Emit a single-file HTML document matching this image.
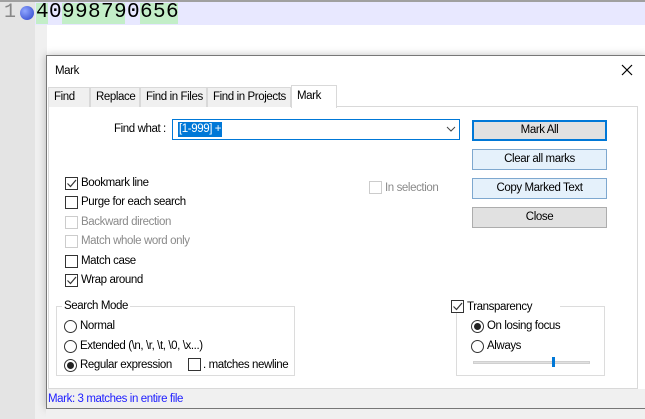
<!DOCTYPE html>
<html><head><style>
*{margin:0;padding:0;box-sizing:border-box}
body{width:645px;height:419px;overflow:hidden;background:#fff;font-family:"Liberation Sans",sans-serif;font-size:11.5px;letter-spacing:-0.4px;color:#000;position:relative}
.a{position:absolute}
.cb{position:absolute;width:13px;height:13px;border:1px solid #333;background:#fff}
.cb.d{border-color:#ccc}
.cb svg{position:absolute;left:0px;top:0px}
.rb{position:absolute;width:13px;height:13px;border:1px solid #333;border-radius:50%;background:#fff}
.rb.on::after{content:"";position:absolute;left:2px;top:2px;width:7px;height:7px;border-radius:50%;background:#222}
.lbl{position:absolute;white-space:nowrap;line-height:15px}
.g{color:#8a8a8a}
.btn{position:absolute;left:472px;width:135px;height:21px;border:1px solid #adadad;background:#e1e1e1;text-align:center;line-height:19px}
.tab{position:absolute;top:87px;height:20px;background:#f0f0f0;border:1px solid #d9d9d9;border-bottom:none;line-height:19px;padding-left:5px;white-space:nowrap}
</style></head><body>
<div class="a" style="left:0;top:0;width:645px;height:2px;background:#a0a0a0"></div>
<div class="a" style="left:0;top:2px;width:35px;height:417px;background:#e4e4e4"></div>
<div class="a" style="left:35px;top:2px;width:610px;height:23px;background:#e8e8ff"></div>
<div class="a" style="left:36px;top:3px;width:12px;height:21px;background:#c3eec8"></div>
<div class="a" style="left:62px;top:3px;width:63px;height:21px;background:#c3eec8"></div>
<div class="a" style="left:140px;top:3px;width:38px;height:21px;background:#c3eec8"></div>
<div class="a" style="left:4px;top:1px;font-family:'Liberation Mono',monospace;font-size:20px;color:#888;line-height:24px;letter-spacing:0">1</div>
<div class="a" style="left:20px;top:6px;width:14px;height:14px;border-radius:50%;background:radial-gradient(circle at 35% 35%,#8fa6ff,#2940c8)"></div>
<div class="a" style="left:36px;top:1px;font-family:'Liberation Mono',monospace;font-size:21px;line-height:24px;color:#000;letter-spacing:0.4px">40998790656</div>
<div class="a" style="left:35px;top:25px;width:12px;height:394px;background:#f0f0f0"></div>

<div class="a" style="left:46px;top:55px;width:600px;height:354px;border:1px solid #777;background:#fff;box-shadow:0 0 8px rgba(0,0,0,.25)"></div>
<div class="lbl" style="left:55px;top:64px">Mark</div>
<svg class="a" style="left:621px;top:64px" width="12" height="12"><path d="M1 1L11 11M11 1L1 11" stroke="#000" stroke-width="1.2"/></svg>

<div class="a" style="left:48px;top:106px;width:590px;height:283px;border:1px solid #d9d9d9;background:#fff"></div>
<div class="tab" style="left:48px;width:42px">Find</div>
<div class="tab" style="left:90px;width:50px">Replace</div>
<div class="tab" style="left:140px;width:67px">Find in Files</div>
<div class="tab" style="left:207px;width:84px">Find in Projects</div>
<div class="tab" style="left:291px;top:85px;height:23px;width:46px;background:#fff;line-height:21px">Mark</div>

<div class="lbl" style="left:114px;top:122px">Find what :</div>
<div class="a" style="left:172px;top:119px;width:288px;height:21px;border:1px solid #0078d7;background:#fff"></div>
<div class="a" style="left:178px;top:122px;height:15px;background:#0078d7;color:#fff;line-height:15px;padding:0 1px">[1-999]&nbsp;+</div>
<svg class="a" style="left:446px;top:126px" width="10" height="6"><path d="M1 1L5 5L9 1" stroke="#444" fill="none"/></svg>

<div class="btn" style="top:120px;border:2px solid #0078d7;line-height:17px">Mark All</div>
<div class="btn" style="top:149px;background:#e5f1fb;border-color:#7ea8cf">Clear all marks</div>
<div class="btn" style="top:178px;background:#e5f1fb;border-color:#7ea8cf">Copy Marked Text</div>
<div class="btn" style="top:207px">Close</div>

<div class="cb d" style="left:369px;top:181px"></div><div class="lbl g" style="left:385px;top:181px">In selection</div>

<div class="cb" style="left:65px;top:177px"><svg width="11" height="11"><path d="M1.5 5.5L4.5 8.5L10 2" stroke="#333" fill="none" stroke-width="1.2"/></svg></div><div class="lbl" style="left:81px;top:176px">Bookmark line</div>
<div class="cb" style="left:65px;top:196px"></div><div class="lbl" style="left:81px;top:195px">Purge for each search</div>
<div class="cb d" style="left:65px;top:216px"></div><div class="lbl g" style="left:81px;top:215px">Backward direction</div>
<div class="cb d" style="left:65px;top:235px"></div><div class="lbl g" style="left:81px;top:234px">Match whole word only</div>
<div class="cb" style="left:65px;top:255px"></div><div class="lbl" style="left:81px;top:254px">Match case</div>
<div class="cb" style="left:65px;top:274px"><svg width="11" height="11"><path d="M1.5 5.5L4.5 8.5L10 2" stroke="#333" fill="none" stroke-width="1.2"/></svg></div><div class="lbl" style="left:81px;top:273px">Wrap around</div>

<div class="a" style="left:56px;top:306px;width:239px;height:70px;border:1px solid #dcdcdc"></div>
<div class="lbl" style="left:62px;top:299px;background:#fff;padding:0 2px">Search Mode</div>
<div class="rb" style="left:64px;top:320px"></div><div class="lbl" style="left:80px;top:319px">Normal</div>
<div class="rb" style="left:64px;top:340px"></div><div class="lbl" style="left:80px;top:339px">Extended (\n, \r, \t, \0, \x...)</div>
<div class="rb on" style="left:64px;top:359px"></div><div class="lbl" style="left:80px;top:358px">Regular expression</div>
<div class="cb" style="left:188px;top:358px"></div>
<div class="lbl" style="left:203px;top:358px">. matches newline</div>

<div class="a" style="left:456px;top:306px;width:149px;height:70px;border:1px solid #dcdcdc"></div>
<div class="a" style="left:450px;top:299px;width:110px;height:14px;background:#fff"></div>
<div class="cb" style="left:451px;top:300px"><svg width="11" height="11"><path d="M1.5 5.5L4.5 8.5L10 2" stroke="#333" fill="none" stroke-width="1.2"/></svg></div><div class="lbl" style="left:467px;top:300px">Transparency</div>
<div class="rb on" style="left:471px;top:320px"></div><div class="lbl" style="left:487px;top:319px">On losing focus</div>
<div class="rb" style="left:471px;top:340px"></div><div class="lbl" style="left:487px;top:339px">Always</div>
<div class="a" style="left:473px;top:361px;width:117px;height:3px;background:#e0e0e0;border:1px solid #d0d0d0"></div>
<div class="a" style="left:552px;top:357px;width:3px;height:10px;background:#0078d7"></div>

<div class="a" style="left:47px;top:389px;width:598px;height:19px;background:#f0f0f0"></div>
<div class="lbl" style="left:48px;top:392px;color:#2020ff">Mark: 3 matches in entire file</div>
<div class="a" style="left:46px;top:409px;width:600px;height:10px;background:#f0f0f0"></div>
</body></html>
